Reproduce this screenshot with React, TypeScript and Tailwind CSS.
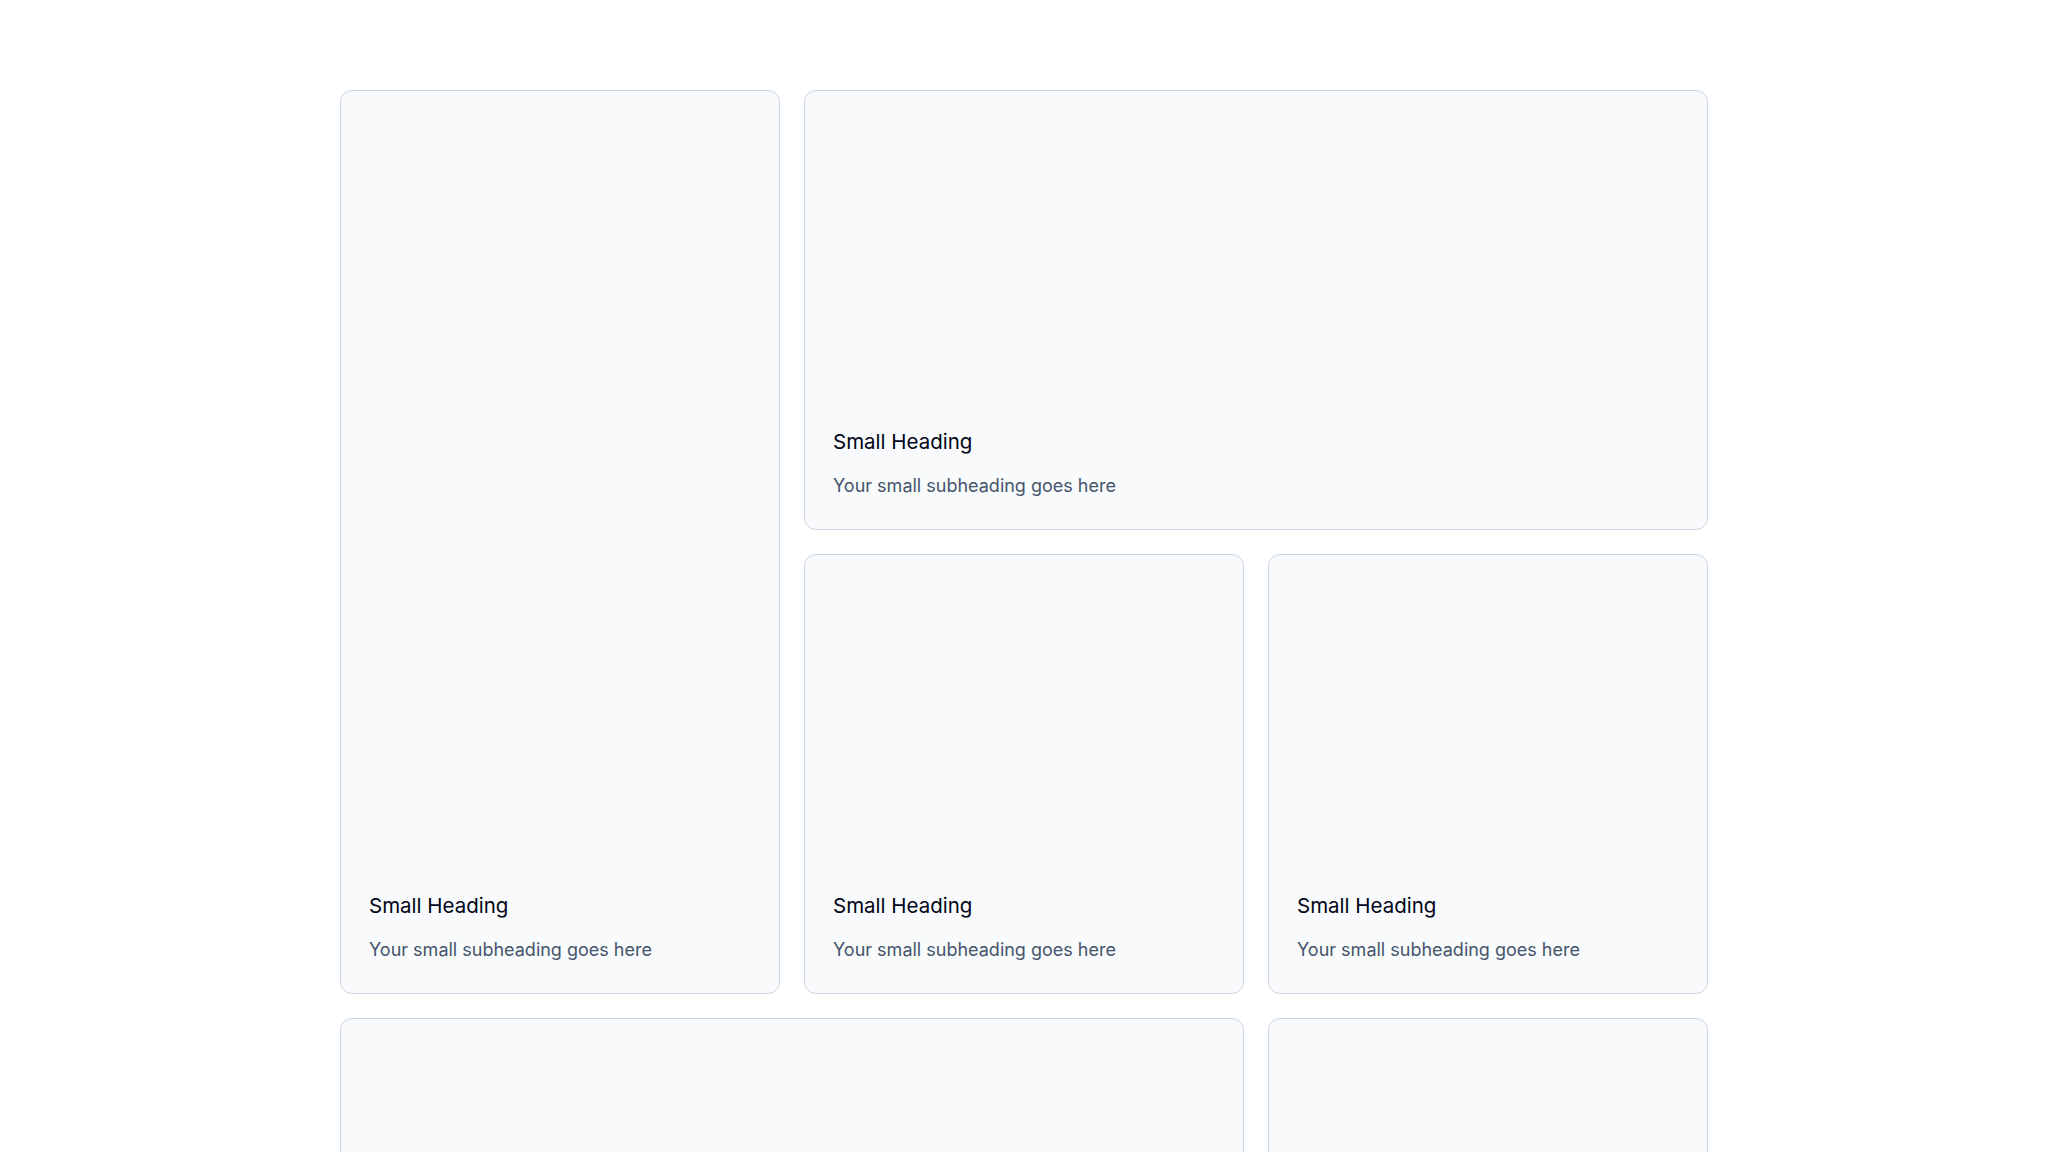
const Card = ({ className = "", text = true }: { className?: string; text?: boolean }) => (
  <div className={`flex flex-col justify-end rounded-xl border border-slate-300 bg-slate-50 px-7 pt-7 pb-[29px] ${className}`}>
    {text && (
      <>
        <h3 className="text-[20.5px] leading-7 font-normal text-slate-950">Small Heading</h3>
        <p className="mt-4 text-lg text-slate-600">Your small subheading goes here</p>
      </>
    )}
  </div>
);

export default function App() {
  return (
    <div className="min-h-screen bg-white pt-[90px] font-['Inter',sans-serif]">
      <div className="mx-auto grid w-[1368px] grid-cols-[repeat(3,440px)] auto-rows-[440px] gap-6">
        <Card className="row-span-2" />
        <Card className="col-span-2" />
        <Card />
        <Card />
        <Card className="col-span-2" />
        <Card />
      </div>
    </div>
  );
}
